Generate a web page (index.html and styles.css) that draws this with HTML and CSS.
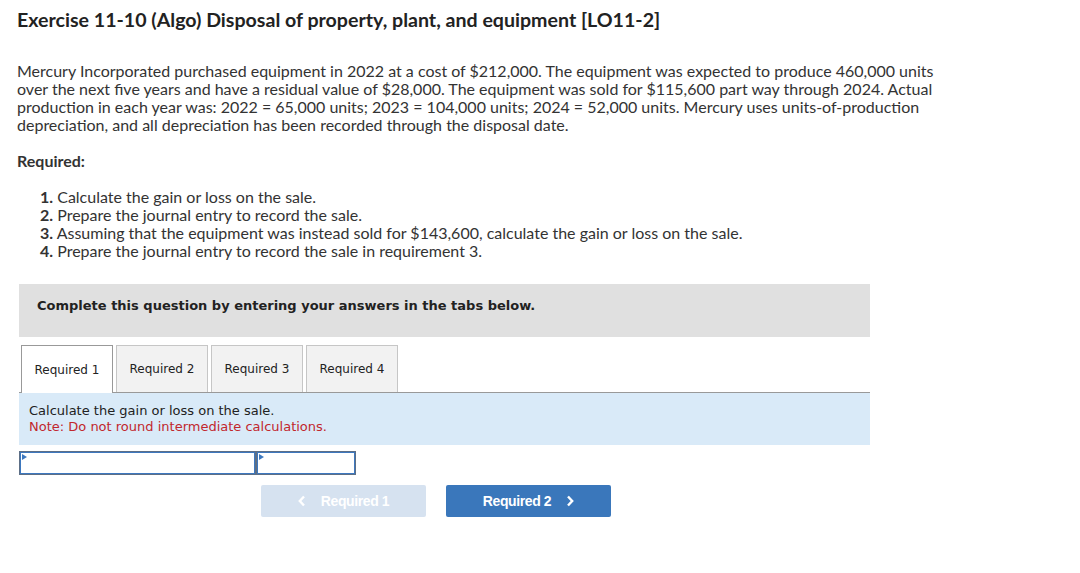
FILE: index.html
```html
<!DOCTYPE html>
<html>
<head>
<meta charset="utf-8">
<link rel="stylesheet" href="styles.css">
</head>
<body>
<div class="page">
  <h1 class="title">Exercise 11-10 (Algo) Disposal of property, plant, and equipment [LO11-2]</h1>
  <p class="intro">Mercury Incorporated purchased equipment in 2022 at a cost of $212,000. The equipment was expected to produce 460,000 units over the next five years and have a residual value of $28,000. The equipment was sold for $115,600 part way through 2024. Actual production in each year was: 2022 = 65,000 units; 2023 = 104,000 units; 2024 = 52,000 units. Mercury uses units-of-production depreciation, and all depreciation has been recorded through the disposal date.</p>
  <p class="req-head">Required:</p>
  <ol class="req-list">
    <li><b>1.</b> Calculate the gain or loss on the sale.</li>
    <li><b>2.</b> Prepare the journal entry to record the sale.</li>
    <li><b>3.</b> Assuming that the equipment was instead sold for $143,600, calculate the gain or loss on the sale.</li>
    <li><b>4.</b> Prepare the journal entry to record the sale in requirement 3.</li>
  </ol>
  <div class="work">
    <div class="banner">Complete this question by entering your answers in the tabs below.</div>
    <div class="tabs">
      <div class="tab active">Required 1</div>
      <div class="tab">Required 2</div>
      <div class="tab">Required 3</div>
      <div class="tab">Required 4</div>
    </div>
    <div class="panel">
      <div>Calculate the gain or loss on the sale.</div>
      <div class="note">Note: Do not round intermediate calculations.</div>
    </div>
    <div class="inputs">
      <div class="field wide"><span class="flag"></span></div>
      <div class="field narrow"><span class="flag"></span></div>
    </div>
    <div class="nav">
      <div class="btn prev"><svg class="chev" width="8" height="12" viewBox="0 0 8 12"><polyline points="6,1.5 1.8,6 6,10.5" fill="none" stroke="#fff" stroke-width="2.4"/></svg>Required 1</div>
      <div class="btn next">Required 2<svg class="chev" width="8" height="12" viewBox="0 0 8 12"><polyline points="2,1.5 6.2,6 2,10.5" fill="none" stroke="#fff" stroke-width="2.4"/></svg></div>
    </div>
  </div>
</div>
</body>
</html>
```

FILE: styles.css
```css
html, body {
  margin: 0;
  padding: 0;
  background: #fff;
}
.page {
  padding: 0 17px;
  font-family: "Lato", "Open Sans", sans-serif;
  color: #333;
}
.title {
  margin: 8px 0 0;
  font-size: 19.6px;
  line-height: 24px;
  font-weight: 700;
  color: #222;
}
.intro {
  margin: 30px 0 0;
  width: 930px;
  font-size: 16px;
  line-height: 18px;
}
.req-head {
  margin: 18px 0 0;
  font-size: 16px;
  line-height: 18px;
  font-weight: 700;
}
.req-list {
  list-style: none;
  margin: 18px 0 0;
  padding-left: 23px;
  font-size: 16px;
  line-height: 18px;
}
.req-list b {
  font-weight: 700;
}
.work {
  margin: 24px 0 0 2px;
  width: 851px;
  font-family: "DejaVu Sans", Verdana, sans-serif;
}
.banner {
  background: #e0e0e0;
  height: 53px;
  box-sizing: border-box;
  padding: 14px 18px 0;
  font-size: 13px;
  line-height: 16px;
  font-weight: 700;
  color: #222;
}
.tabs {
  display: flex;
  gap: 3px;
  margin-top: 8px;
  padding-left: 2px;
  border-bottom: 1px solid #999;
  height: 47px;
}
.tab {
  width: 92px;
  box-sizing: border-box;
  height: 47px;
  border: 1px solid #c6c6c6;
  border-bottom: none;
  background: #f2f2f2;
  display: flex;
  align-items: center;
  justify-content: center;
  font-size: 12px;
  color: #222;
}
.tab.active {
  background: #fff;
  border-color: #999;
  height: 48px;
  position: relative;
  z-index: 1;
}
.panel {
  background: #d9eaf8;
  height: 52px;
  box-sizing: border-box;
  padding: 10px 10px 0;
  font-size: 13px;
  line-height: 16px;
  color: #222;
}
.note {
  color: #c1272d;
}
.inputs {
  display: flex;
  margin-top: 6px;
}
.field {
  height: 24px;
  box-sizing: border-box;
  border: 1px solid #5d6f86;
  box-shadow: inset 0 0 0 1px #3d78bf;
  position: relative;
}
.field.wide {
  width: 237px;
}
.field.narrow {
  width: 100px;
}
.flag {
  position: absolute;
  left: 2px;
  top: 2px;
  width: 0;
  height: 0;
  border-top: 3px solid transparent;
  border-bottom: 3px solid transparent;
  border-left: 5px solid #3d78bf;
}
.nav {
  display: flex;
  gap: 20px;
  margin: 10px 0 0 242px;
}
.btn {
  width: 165px;
  height: 32px;
  border-radius: 2px;
  display: flex;
  align-items: center;
  justify-content: center;
  font-family: "Liberation Sans", Arial, sans-serif;
  font-size: 14px;
  font-weight: 700;
  color: #fff;
  letter-spacing: -0.4px;
}
.btn.prev {
  background: #d6e2f0;
}
.btn.next {
  background: #3a77bb;
}
.chev {
  display: block;
}
.prev .chev {
  margin-right: 15px;
}
.next .chev {
  margin-left: 15px;
}
```
